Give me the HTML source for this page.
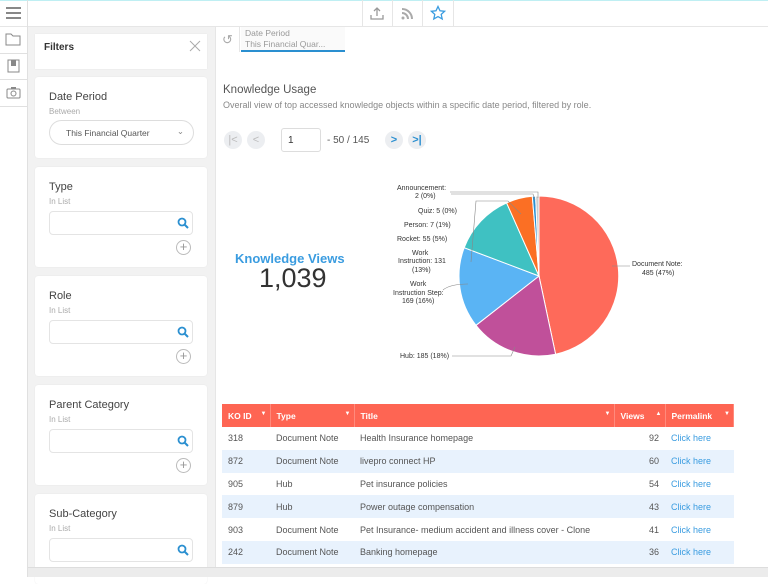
<!DOCTYPE html>
<html><head><meta charset="utf-8"><style>
*{box-sizing:border-box;margin:0;padding:0}
body{width:768px;height:577px;overflow:hidden;background:#fff;font-family:"Liberation Sans",sans-serif;color:#444;position:relative}
.abs{position:absolute}
.card{position:absolute;left:35px;width:172px;background:#fff;border-radius:3px;box-shadow:0 0 1px #ddd}
.card h4{position:absolute;left:14px;top:14px;font-size:11px;font-weight:normal;color:#444}
.card .sub{position:absolute;left:14px;top:30px;font-size:8px;color:#aaa}
.inp{position:absolute;left:14px;top:44px;width:144px;height:24px;border:1px solid #e4e4e4;border-radius:4px;background:#fff}
.plus{position:absolute;left:141px;top:73px;width:15px;height:15px;border:1px solid #bbb;border-radius:50%;color:#999;font-size:13px;line-height:12px;text-align:center}
table{border-collapse:collapse;position:absolute;left:222px;top:404px;width:512px;font-size:9px}
th{background:#fe6553;color:#fff;text-align:left;height:23px;padding-left:6px;border-right:1px solid #ff8a7c;font-size:8.5px}
td{height:22.8px;padding-left:6px;color:#555}
tr:nth-child(odd) td{background:#e8f2fd}
td.l{color:#3a9ce0}
td.r{text-align:right;padding-right:6px}
.nav{position:absolute;top:131px;width:18px;height:18px;border-radius:50%;background:#eceef1;text-align:center;font-size:11px;line-height:18px;color:#bbb}
</style></head><body>
<div class="abs" style="left:0;top:0;width:768px;height:1px;background:#bfeff3"></div>
<div class="abs" style="left:0;top:26px;width:768px;height:1px;background:#e6e6e6"></div>
<div class="abs" style="left:27px;top:0;width:1px;height:577px;background:#e0e0e0"></div>
<div class="abs" style="left:6px;top:7px;width:15px;height:2px;background:#888;box-shadow:0 5px 0 #888,0 10px 0 #888"></div>
<div class="abs" style="left:0;top:53px;width:27px;height:1px;background:#e0e0e0"></div>
<div class="abs" style="left:0;top:79px;width:27px;height:1px;background:#e0e0e0"></div>
<div class="abs" style="left:0;top:106px;width:27px;height:1px;background:#e0e0e0"></div>
<svg class="abs" style="left:5px;top:32px" width="17" height="14"><path d="M1 2h5l2 2h7v9H1z" fill="none" stroke="#888"/></svg>
<svg class="abs" style="left:7px;top:59px" width="14" height="14"><rect x="1" y="1" width="11" height="12" fill="none" stroke="#888"/><rect x="4" y="1" width="5" height="6" fill="#888"/></svg>
<svg class="abs" style="left:6px;top:86px" width="16" height="13"><rect x="1" y="3" width="13" height="9" rx="1" fill="none" stroke="#888"/><circle cx="7.5" cy="7.5" r="2.5" fill="none" stroke="#888"/><rect x="5" y="1" width="5" height="2" fill="#888"/></svg>
<div class="abs" style="left:362px;top:0;width:1px;height:26px;background:#e6e6e6"></div>
<div class="abs" style="left:392px;top:0;width:1px;height:26px;background:#e6e6e6"></div>
<div class="abs" style="left:422px;top:0;width:1px;height:26px;background:#e6e6e6"></div>
<div class="abs" style="left:453px;top:0;width:1px;height:26px;background:#e6e6e6"></div>
<svg class="abs" style="left:369px;top:6px" width="16" height="15"><path d="M8 2v8M5 5l3-3 3 3M2 9v4h12V9" fill="none" stroke="#999" stroke-width="1.3"/></svg>
<svg class="abs" style="left:400px;top:7px" width="14" height="13"><circle cx="3" cy="11" r="1.5" fill="#aaa"/><path d="M2 6a6 6 0 0 1 6 6M2 2a10 10 0 0 1 10 10" fill="none" stroke="#aaa" stroke-width="2"/></svg>
<svg class="abs" style="left:430px;top:5px" width="16" height="16"><path d="M8 1.5l2 4.3 4.6.5-3.4 3.1 1 4.6L8 11.6 3.8 14l1-4.6L1.4 6.3 6 5.8z" fill="none" stroke="#3a9ce0" stroke-width="1.3"/></svg>
<div class="abs" style="left:28px;top:27px;width:187px;height:550px;background:#f2f2f2"></div>
<div class="card" style="top:34px;height:35px;border-radius:0"><div style="position:absolute;left:9px;top:8px;font-size:10px;font-weight:bold;color:#333">Filters</div>
<svg style="position:absolute;left:154px;top:6px" width="12" height="12"><path d="M1 1l10 10M11 1L1 11" stroke="#aaa"/></svg></div>
<div class="card" style="top:77px;height:81px"><h4>Date Period</h4><div class="sub">Between</div>
<div style="position:absolute;left:14px;top:43px;width:145px;height:25px;border:1px solid #ddd;border-radius:13px;font-size:8.5px;color:#555;padding:7px 0 0 16px">This Financial Quarter<span style="position:absolute;right:9px;top:5px;color:#888">⌄</span></div></div>
<div class="card" style="top:167px;height:100px"><h4>Type</h4><div class="sub">In List</div><div class="inp"></div><svg style="position:absolute;left:142px;top:50px" width="12" height="12"><circle cx="5" cy="5" r="3.5" fill="none" stroke="#2a8fd0" stroke-width="1.8"/><path d="M7.5 7.5l3.5 3.5" stroke="#2a8fd0" stroke-width="2"/></svg><div class="plus">+</div></div>
<div class="card" style="top:276px;height:100px"><h4>Role</h4><div class="sub">In List</div><div class="inp"></div><svg style="position:absolute;left:142px;top:50px" width="12" height="12"><circle cx="5" cy="5" r="3.5" fill="none" stroke="#2a8fd0" stroke-width="1.8"/><path d="M7.5 7.5l3.5 3.5" stroke="#2a8fd0" stroke-width="2"/></svg><div class="plus">+</div></div>
<div class="card" style="top:385px;height:100px"><h4>Parent Category</h4><div class="sub">In List</div><div class="inp"></div><svg style="position:absolute;left:142px;top:50px" width="12" height="12"><circle cx="5" cy="5" r="3.5" fill="none" stroke="#2a8fd0" stroke-width="1.8"/><path d="M7.5 7.5l3.5 3.5" stroke="#2a8fd0" stroke-width="2"/></svg><div class="plus">+</div></div>
<div class="card" style="top:494px;height:90px"><h4>Sub-Category</h4><div class="sub">In List</div><div class="inp"></div><svg style="position:absolute;left:142px;top:50px" width="12" height="12"><circle cx="5" cy="5" r="3.5" fill="none" stroke="#2a8fd0" stroke-width="1.8"/><path d="M7.5 7.5l3.5 3.5" stroke="#2a8fd0" stroke-width="2"/></svg></div>
<div class="abs" style="left:215px;top:27px;width:1px;height:550px;background:#e6e6e6"></div>
<div class="abs" style="left:216px;top:27px;width:24px;height:25px;border-right:1px solid #e6e6e6;color:#aaa;font-size:13px;text-align:center;line-height:25px">↺</div>
<div class="abs" style="left:241px;top:27px;width:104px;height:25px;border-bottom:2px solid #2a8fd0;font-size:8.5px;color:#999;padding:1px 0 0 4px;line-height:11px;background:#fafafa">Date Period<br>This Financial Quar...</div>
<div class="abs" style="left:223px;top:84px;font-size:11.5px;color:#555">Knowledge Usage</div>
<div class="abs" style="left:223px;top:100px;font-size:9px;color:#888">Overall view of top accessed knowledge objects within a specific date period, filtered by role.</div>
<div class="nav" style="left:224px">|&lt;</div><div class="nav" style="left:247px">&lt;</div>
<div class="abs" style="left:281px;top:128px;width:40px;height:24px;border:1px solid #ddd;border-radius:3px;font-size:10px;padding:6px 0 0 6px;color:#333">1</div>
<div class="abs" style="left:327px;top:135px;font-size:10px;color:#555">- 50 / 145</div>
<div class="nav" style="left:385px;color:#2a8fd0;font-weight:bold">&gt;</div><div class="nav" style="left:408px;color:#2a8fd0;font-weight:bold">&gt;|</div>
<div class="abs" style="left:235px;top:251px;font-size:13px;font-weight:bold;color:#3a9ce0">Knowledge Views</div>
<div class="abs" style="left:259px;top:263px;font-size:27px;color:#333">1,039</div>
<svg class="abs" style="left:380px;top:170px" width="340" height="200" font-family="Liberation Sans" font-size="7" fill="#333">
<g transform="translate(-380,-170)" stroke="#fff" stroke-width="1">
<path d="M539 276L539 196A80 80 0 0 1 555.6 354.2Z" fill="#fe6a5a"/>
<path d="M539 276L555.6 354.2A80 80 0 0 1 476 325.3Z" fill="#c0509a"/>
<path d="M539 276L476 325.3A80 80 0 0 1 464.2 247.7Z" fill="#5ab4f4"/>
<path d="M539 276L464.2 247.7A80 80 0 0 1 506.6 202.9Z" fill="#3fc1c2"/>
<path d="M539 276L506.6 202.9A80 80 0 0 1 532.3 196.3Z" fill="#fb6f24"/>
<path d="M539 276L532.3 196.3A80 80 0 0 1 535.6 196.1Z" fill="#2a8fd0"/>
<path d="M539 276L535.6 196.1A80 80 0 0 1 539 196Z" fill="#ccc"/>
</g>
<g fill="none" stroke="#888" stroke-width="0.6">
<path d="M250 96H232M72 186H131L135 177M63 120Q70 114 88 114M91 92L96 31H128L141 44M70 22H158V28M71 24H153L155 30"/>
</g>
<text x="17" y="20">Announcement:</text><text x="35" y="28">2 (0%)</text>
<text x="38" y="43">Quiz: 5 (0%)</text>
<text x="24" y="57">Person: 7 (1%)</text>
<text x="17" y="71">Rocket: 55 (5%)</text>
<text x="32" y="85">Work</text><text x="18" y="93">Instruction: 131</text><text x="32" y="102">(13%)</text>
<text x="30" y="116">Work</text><text x="13" y="125">Instruction Step:</text><text x="22" y="133">169 (16%)</text>
<text x="20" y="188">Hub: 185 (18%)</text>
<text x="252" y="96">Document Note:</text><text x="262" y="105">485 (47%)</text>
</svg>
<table>
<tr><th style="width:48px">KO ID <span style="float:right;padding-right:3px;font-size:6px">▼</span></th><th style="width:84px">Type <span style="float:right;padding-right:3px;font-size:6px">▼</span></th><th style="width:260px">Title <span style="float:right;padding-right:3px;font-size:6px">▼</span></th><th style="width:51px">Views <span style="float:right;padding-right:3px;font-size:6px">▲</span></th><th>Permalink <span style="float:right;padding-right:3px;font-size:6px">▼</span></th></tr>
<tr><td>318</td><td>Document Note</td><td>Health Insurance homepage</td><td class="r">92</td><td class="l">Click here</td></tr>
<tr><td>872</td><td>Document Note</td><td>livepro connect HP</td><td class="r">60</td><td class="l">Click here</td></tr>
<tr><td>905</td><td>Hub</td><td>Pet insurance policies</td><td class="r">54</td><td class="l">Click here</td></tr>
<tr><td>879</td><td>Hub</td><td>Power outage compensation</td><td class="r">43</td><td class="l">Click here</td></tr>
<tr><td>903</td><td>Document Note</td><td>Pet Insurance- medium accident and illness cover - Clone</td><td class="r">41</td><td class="l">Click here</td></tr>
<tr><td>242</td><td>Document Note</td><td>Banking homepage</td><td class="r">36</td><td class="l">Click here</td></tr>
</table>
<div class="abs" style="left:28px;top:567px;width:740px;height:10px;background:#ececec;border-top:1px solid #ddd"></div>
</body></html>
